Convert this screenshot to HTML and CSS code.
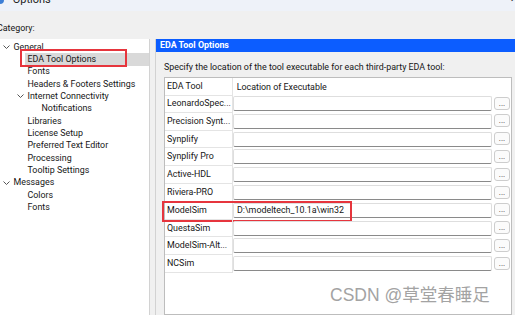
FILE: index.html
```html
<!DOCTYPE html>
<html lang="en">
<head>
    <meta charset="UTF-8">
    <title>Options</title>
    <link rel="stylesheet" href="styles.css">
</head>
<body>
    <div class="titlebar">
        <span class="app-icon"></span>
        <span class="title">Options</span>
        <span class="close">&#x2715;</span>
    </div>

    <div class="category-label">Category:</div>

    <div class="content">
        <div class="tree">
            <div class="node lvl1">
                <span class="twisty"><svg width="7" height="4" viewBox="0 0 7 4"><path d="M0.5 0.5 L3.5 3.5 L6.5 0.5" fill="none" stroke="#555" stroke-width="1"/></svg></span>
                <span class="label">General</span>
            </div>
            <div class="node lvl2 selected">
                <span class="twisty"></span>
                <span class="label">EDA Tool Options</span>
                <span class="mark mark-tree"></span>
            </div>
            <div class="node lvl2"><span class="twisty"></span><span class="label">Fonts</span></div>
            <div class="node lvl2"><span class="twisty"></span><span class="label">Headers &amp; Footers Settings</span></div>
            <div class="node lvl2">
                <span class="twisty"><svg width="7" height="4" viewBox="0 0 7 4"><path d="M0.5 0.5 L3.5 3.5 L6.5 0.5" fill="none" stroke="#555" stroke-width="1"/></svg></span>
                <span class="label">Internet Connectivity</span>
            </div>
            <div class="node lvl3"><span class="twisty"></span><span class="label">Notifications</span></div>
            <div class="node lvl2"><span class="twisty"></span><span class="label">Libraries</span></div>
            <div class="node lvl2"><span class="twisty"></span><span class="label">License Setup</span></div>
            <div class="node lvl2"><span class="twisty"></span><span class="label">Preferred Text Editor</span></div>
            <div class="node lvl2"><span class="twisty"></span><span class="label">Processing</span></div>
            <div class="node lvl2"><span class="twisty"></span><span class="label">Tooltip Settings</span></div>
            <div class="node lvl1">
                <span class="twisty"><svg width="7" height="4" viewBox="0 0 7 4"><path d="M0.5 0.5 L3.5 3.5 L6.5 0.5" fill="none" stroke="#555" stroke-width="1"/></svg></span>
                <span class="label">Messages</span>
            </div>
            <div class="node lvl2"><span class="twisty"></span><span class="label">Colors</span></div>
            <div class="node lvl2"><span class="twisty"></span><span class="label">Fonts</span></div>
        </div>

        <div class="page">
            <div class="page-header">EDA Tool Options</div>
            <div class="page-body">
                <p class="hint">Specify the location of the tool executable for each third-party EDA tool:</p>
                <div class="grid">
                    <div class="row head">
                        <div class="cell-name">EDA Tool</div>
                        <div class="cell-loc">Location of Executable</div>
                    </div>
                    <div class="row">
                        <div class="cell-name">LeonardoSpec...</div>
                        <div class="cell-loc"><span class="path"></span><span class="browse">...</span></div>
                    </div>
                    <div class="row">
                        <div class="cell-name">Precision Synt...</div>
                        <div class="cell-loc"><span class="path"></span><span class="browse">...</span></div>
                    </div>
                    <div class="row">
                        <div class="cell-name">Synplify</div>
                        <div class="cell-loc"><span class="path"></span><span class="browse">...</span></div>
                    </div>
                    <div class="row">
                        <div class="cell-name">Synplify Pro</div>
                        <div class="cell-loc"><span class="path"></span><span class="browse">...</span></div>
                    </div>
                    <div class="row">
                        <div class="cell-name">Active-HDL</div>
                        <div class="cell-loc"><span class="path"></span><span class="browse">...</span></div>
                    </div>
                    <div class="row">
                        <div class="cell-name">Riviera-PRO</div>
                        <div class="cell-loc"><span class="path"></span><span class="browse">...</span></div>
                    </div>
                    <div class="row">
                        <div class="cell-name">ModelSim</div>
                        <div class="cell-loc"><span class="path">D:\modeltech_10.1a\win32</span><span class="browse">...</span></div>
                        <span class="mark mark-row"></span>
                    </div>
                    <div class="row">
                        <div class="cell-name">QuestaSim</div>
                        <div class="cell-loc"><span class="path"></span><span class="browse">...</span></div>
                    </div>
                    <div class="row">
                        <div class="cell-name">ModelSim-Alt...</div>
                        <div class="cell-loc"><span class="path"></span><span class="browse">...</span></div>
                    </div>
                    <div class="row">
                        <div class="cell-name">NCSim</div>
                        <div class="cell-loc"><span class="path"></span><span class="browse">...</span></div>
                    </div>
                </div>
            </div>
        </div>
    </div>

    <div class="watermark">CSDN @草堂春睡足</div>
</body>
</html>
```

FILE: styles.css
```css
* {
    padding: 0;
    margin: 0;
    box-sizing: border-box;
}

body {
    width: 515px;
    height: 315px;
    overflow: hidden;
    position: relative;
    background: #f0f0f0;
    color: #161616;
    font-family: Roboto, 'Liberation Sans', sans-serif;
    font-size: 8.9px;
}

/* window title, mostly cut off at the top */
.titlebar {
    height: 11px;
    display: flex;
    overflow: hidden;
    background: #eef2f9;
}

.app-icon {
    width: 8px;
    height: 8px;
    margin: -4px 0 0 -4px;
    border-radius: 50%;
    background: #3d7fd6;
}

.title {
    font-size: 11px;
    line-height: 11px;
    margin: -5.8px 0 0 8.7px;
    color: #222;
}

.close {
    margin: -6px -3px 0 auto;
    font-size: 10px;
    line-height: 10px;
    color: #333;
}

.category-label {
    line-height: 12px;
    margin: 11px 0 5px;
    text-indent: -3px;
}

.content {
    display: flex;
    gap: 5px;
    height: 276px;
}

/* category tree */
.tree {
    width: 150px;
    padding-top: 1.7px;
    background: #fff;
    border-right: 1px solid #d2d2d2;
}

.node {
    position: relative;
    display: flex;
    align-items: center;
    height: 12.35px;
    line-height: 12.35px;
}

.lvl2 {
    padding-left: 14px;
}

.lvl3 {
    padding-left: 28px;
}

.twisty {
    width: 11px;
    display: flex;
    align-items: center;
    padding-left: 2.5px;
}

.label {
    flex: 1;
    padding-left: 2.5px;
    white-space: nowrap;
}

.selected .label {
    background: #d9d9d9;
    height: 13.4px;
    line-height: 13.4px;
}

/* red highlight frames drawn over the screenshot */
.mark {
    position: absolute;
    border: 2px solid #e6353d;
}

.mark-tree {
    left: 20px;
    top: -3.7px;
    width: 107px;
    height: 17.6px;
}

.mark-row {
    left: -3px;
    top: -1.2px;
    width: 190px;
    height: 21px;
}

/* option page */
.page {
    flex: 1;
    display: flex;
    flex-direction: column;
    border-left: 1px solid #d2d2d2;
}

.page-header {
    height: 13px;
    line-height: 13px;
    padding-left: 4px;
    background: #0c5dff;
    color: #fff;
    font-weight: bold;
}

.page-body {
    flex: 1;
    display: flex;
    flex-direction: column;
    padding: 0 3px 0 8px;
}

.hint {
    line-height: 12px;
    margin: 9px 0 4px;
    white-space: nowrap;
}

.grid {
    flex: 1;
    background: #fff;
    border: 1px solid #bdbdbd;
}

.row {
    position: relative;
    display: grid;
    grid-template-columns: 68px 1fr;
    height: 17.8px;
}

.row.head {
    height: 17px;
}

.cell-name {
    padding-left: 2px;
    line-height: 17px;
    white-space: nowrap;
    overflow: hidden;
    border-right: 1px solid #e4e4e4;
    border-bottom: 1px solid #e4e4e4;
}

.cell-loc {
    display: flex;
    align-items: flex-start;
    gap: 2px;
    padding: 1px 1px 0 0;
}

.head .cell-loc {
    padding-left: 3.7px;
    line-height: 17px;
}

.path {
    flex: 1;
    height: 15px;
    line-height: 13px;
    padding-left: 3px;
    background: #fff;
    border: 1px solid #dedede;
    border-bottom-color: #8a8a8a;
    border-radius: 2px;
}

.browse {
    width: 16px;
    height: 13px;
    margin-top: 0.7px;
    background: #fbfbfb;
    border: 1px solid #cdcdcd;
    border-radius: 3px;
    font-size: 8px;
    line-height: 12px;
    text-align: center;
    color: #333;
}

.watermark {
    position: absolute;
    left: 330px;
    top: 285px;
    font-family: 'Liberation Sans', 'Noto Sans CJK SC', sans-serif;
    font-size: 17.5px;
    line-height: 20px;
    color: #a3a3a3;
    white-space: nowrap;
}
```
